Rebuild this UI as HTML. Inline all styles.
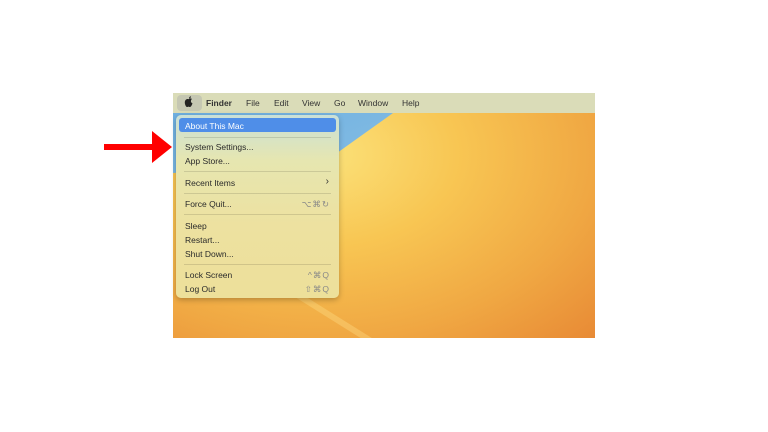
<!DOCTYPE html>
<html><head><style>
body{margin:0;width:768px;height:432px;background:#fff;position:relative;overflow:hidden;font-family:"Liberation Sans",sans-serif}
#scr{position:absolute;left:173px;top:93px;width:422px;height:245px;overflow:hidden;
background:radial-gradient(ellipse at 35% 25%,#fbe27a 0%,#f8c653 35%,#f0a843 70%,#e88a35 100%)}
#blue{position:absolute;left:0;top:20px;width:422px;height:60px;background:linear-gradient(160deg,#6fb0e0,#8fc3e6);clip-path:polygon(0 0,220px 0,150px 50px,0 60px)}
#streak{position:absolute;left:110px;top:190px;width:150px;height:6px;background:rgba(255,225,140,.35);transform:rotate(32deg);transform-origin:left}
#bar{position:absolute;left:0;top:0;width:422px;height:20px;background:#dadcb8;font-size:8.5px;color:#333}
#bar span{position:absolute;top:5px}
#apple{position:absolute;left:4px;top:2px;width:25px;height:16px;background:#c5c7b2;border-radius:4px}
#menu{position:absolute;left:176px;top:115px;width:163px;height:183px;border-radius:5px;
background:linear-gradient(180deg,#c9e0d8 0%,#e6e6b0 25%,#ede1a0 60%,#ede09a 100%);box-shadow:0 2px 6px rgba(0,0,0,.25);font-size:8.5px;color:#2a2a2a}
.it{position:absolute;left:9px}
.sc{position:absolute;right:9px;color:#888;font-size:8.5px;letter-spacing:1px}
.sep{position:absolute;left:8px;right:8px;height:1px;background:rgba(0,0,0,.12)}
#hl{position:absolute;left:3px;top:3px;width:157px;height:14px;background:#4f8ee8;border-radius:3px}
</style></head><body>
<div id="scr"><div id="blue"></div><div id="streak"></div>
<div id="bar"><div id="apple"></div>
<svg style="position:absolute;left:11px;top:3px" width="10" height="12" viewBox="0 0 10 12"><path d="M5 3C6 2 7 2.5 8 3 7 3.5 6.8 5 7 6 7.5 7 8.5 7.3 8.5 7.3 8 9 7 11 6 11 5.3 11 5 10.6 4.5 10.6 4 10.6 3.6 11 3 11 2 11 .8 8.5 .8 6.5.8 4.2 2.3 3 3.6 3 4.2 3 4.6 3.4 5 3ZM5 2.5C5 1.2 6 .4 7 .3 7 1.5 6.2 2.4 5 2.5Z" fill="#222"/></svg>
<span style="left:33px;font-weight:bold">Finder</span><span style="left:73px">File</span><span style="left:101px">Edit</span><span style="left:129px">View</span><span style="left:161px">Go</span><span style="left:185px">Window</span><span style="left:229px">Help</span></div>
</div>
<div id="menu"><div id="hl"></div>
<div class="it" style="top:6px;color:#fff">About This Mac</div>
<div class="sep" style="top:22px"></div>
<div class="it" style="top:27px">System Settings...</div>
<div class="it" style="top:41px">App Store...</div>
<div class="sep" style="top:56px"></div>
<div class="it" style="top:63px">Recent Items</div><div class="sc" style="top:61px;color:#333;font-size:10px">&#x203A;</div>
<div class="sep" style="top:78px"></div>
<div class="it" style="top:84px">Force Quit...</div><div class="sc" style="top:84px">⌥⌘↻</div>
<div class="sep" style="top:99px"></div>
<div class="it" style="top:106px">Sleep</div>
<div class="it" style="top:120px">Restart...</div>
<div class="it" style="top:134px">Shut Down...</div>
<div class="sep" style="top:149px"></div>
<div class="it" style="top:155px">Lock Screen</div><div class="sc" style="top:155px">^⌘Q</div>
<div class="it" style="top:169px">Log Out</div><div class="sc" style="top:169px">⇧⌘Q</div>
</div>
<svg style="position:absolute;left:100px;top:128px" width="76" height="40"><path d="M4 16H52V3L72 19 52 35V22H4Z" fill="#f00"/></svg>
</body></html>
